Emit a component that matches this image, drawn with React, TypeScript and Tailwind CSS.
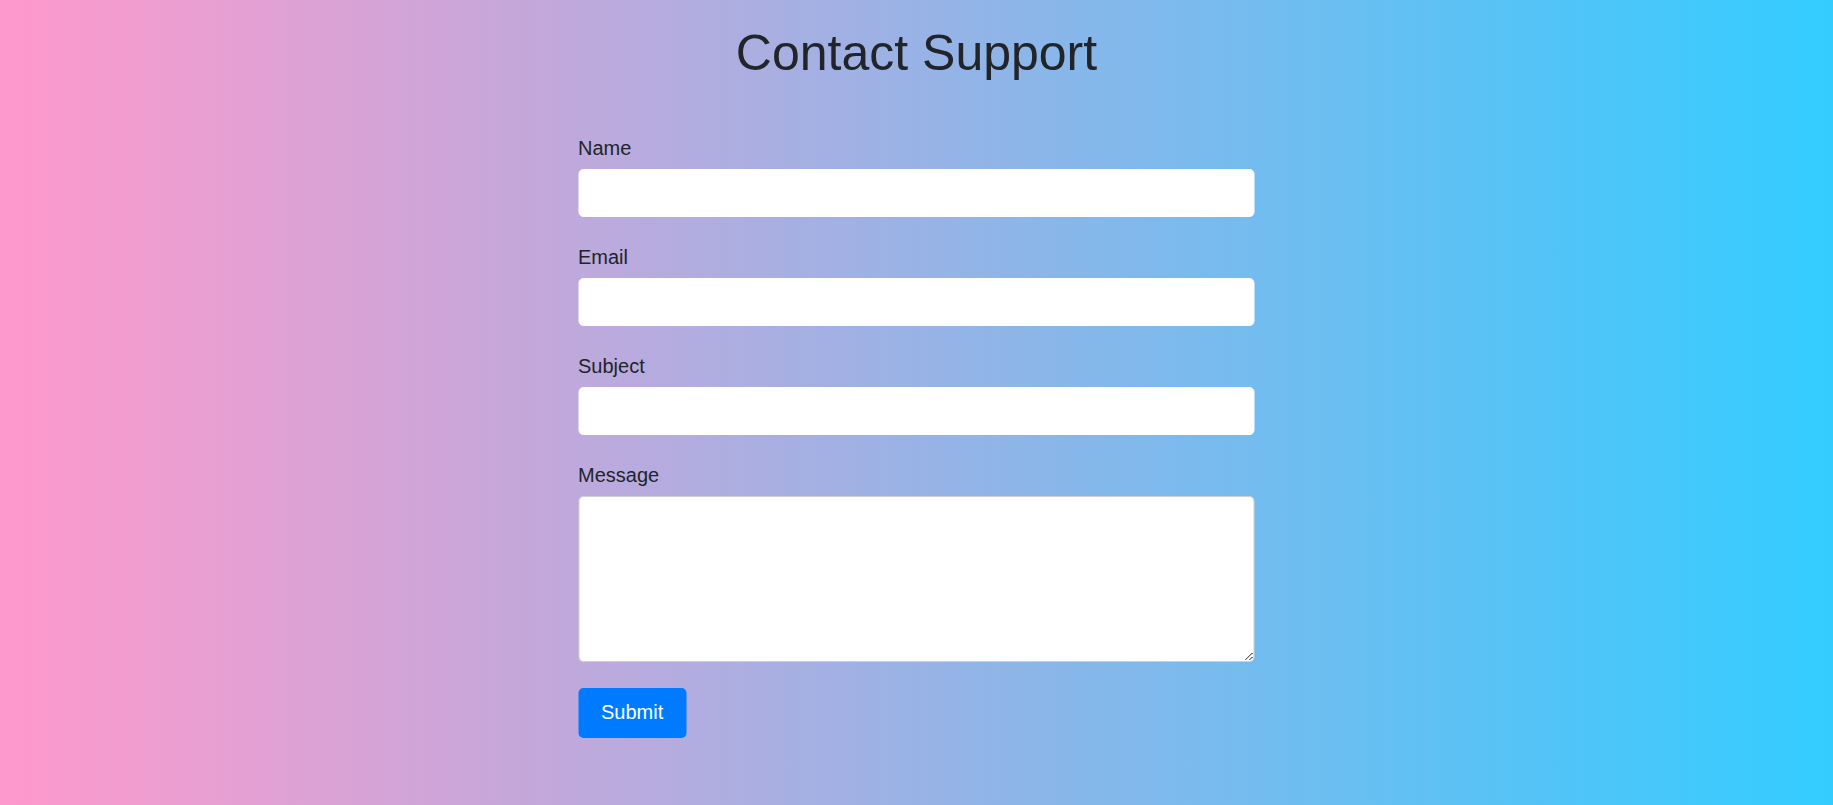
import React from "react";

const FIELDS = [
  { id: "name", label: "Name", type: "text" },
  { id: "email", label: "Email", type: "email" },
  { id: "subject", label: "Subject", type: "text" },
];

export default function App() {
  return (
    <div
      className="min-h-screen w-full bg-[linear-gradient(to_right,#ff99cc,#33ccff)] text-[#212529]"
      style={{ fontFamily: '"Liberation Sans", Arial, sans-serif' }}
    >
      <div className="pt-[23px] pb-[40px]">
        <h1 className="text-center text-[50px] font-normal leading-[60px]">Contact Support</h1>
        <form className="mx-auto mt-[50px] w-[676px] -translate-x-[0.5px]" onSubmit={(e) => e.preventDefault()}>
          {FIELDS.map((f) => (
            <div key={f.id} className="mb-[25.5px]">
              <label htmlFor={f.id} className="mb-[6px] block text-[20px] leading-[30px]">
                {f.label}
              </label>
              <input
                id={f.id}
                type={f.type}
                className="block h-[47.5px] w-full rounded-[5px] border border-white bg-white px-[15px] text-[20px] outline-none"
              />
            </div>
          ))}
          <div className="mb-[26px]">
            <label htmlFor="message" className="mb-[6px] block text-[20px] leading-[30px]">
              Message
            </label>
            <textarea
              id="message"
              className="block h-[166px] w-full rounded-[5px] border border-[#cfcfcf] bg-white px-[15px] py-[8px] text-[20px] outline-none"
            />
          </div>
          <button
            type="submit"
            className="h-[49.5px] rounded-[5px] bg-[#007bff] px-[23px] text-[20px] leading-[23px] text-white"
          >
            Submit
          </button>
        </form>
      </div>
    </div>
  );
}
